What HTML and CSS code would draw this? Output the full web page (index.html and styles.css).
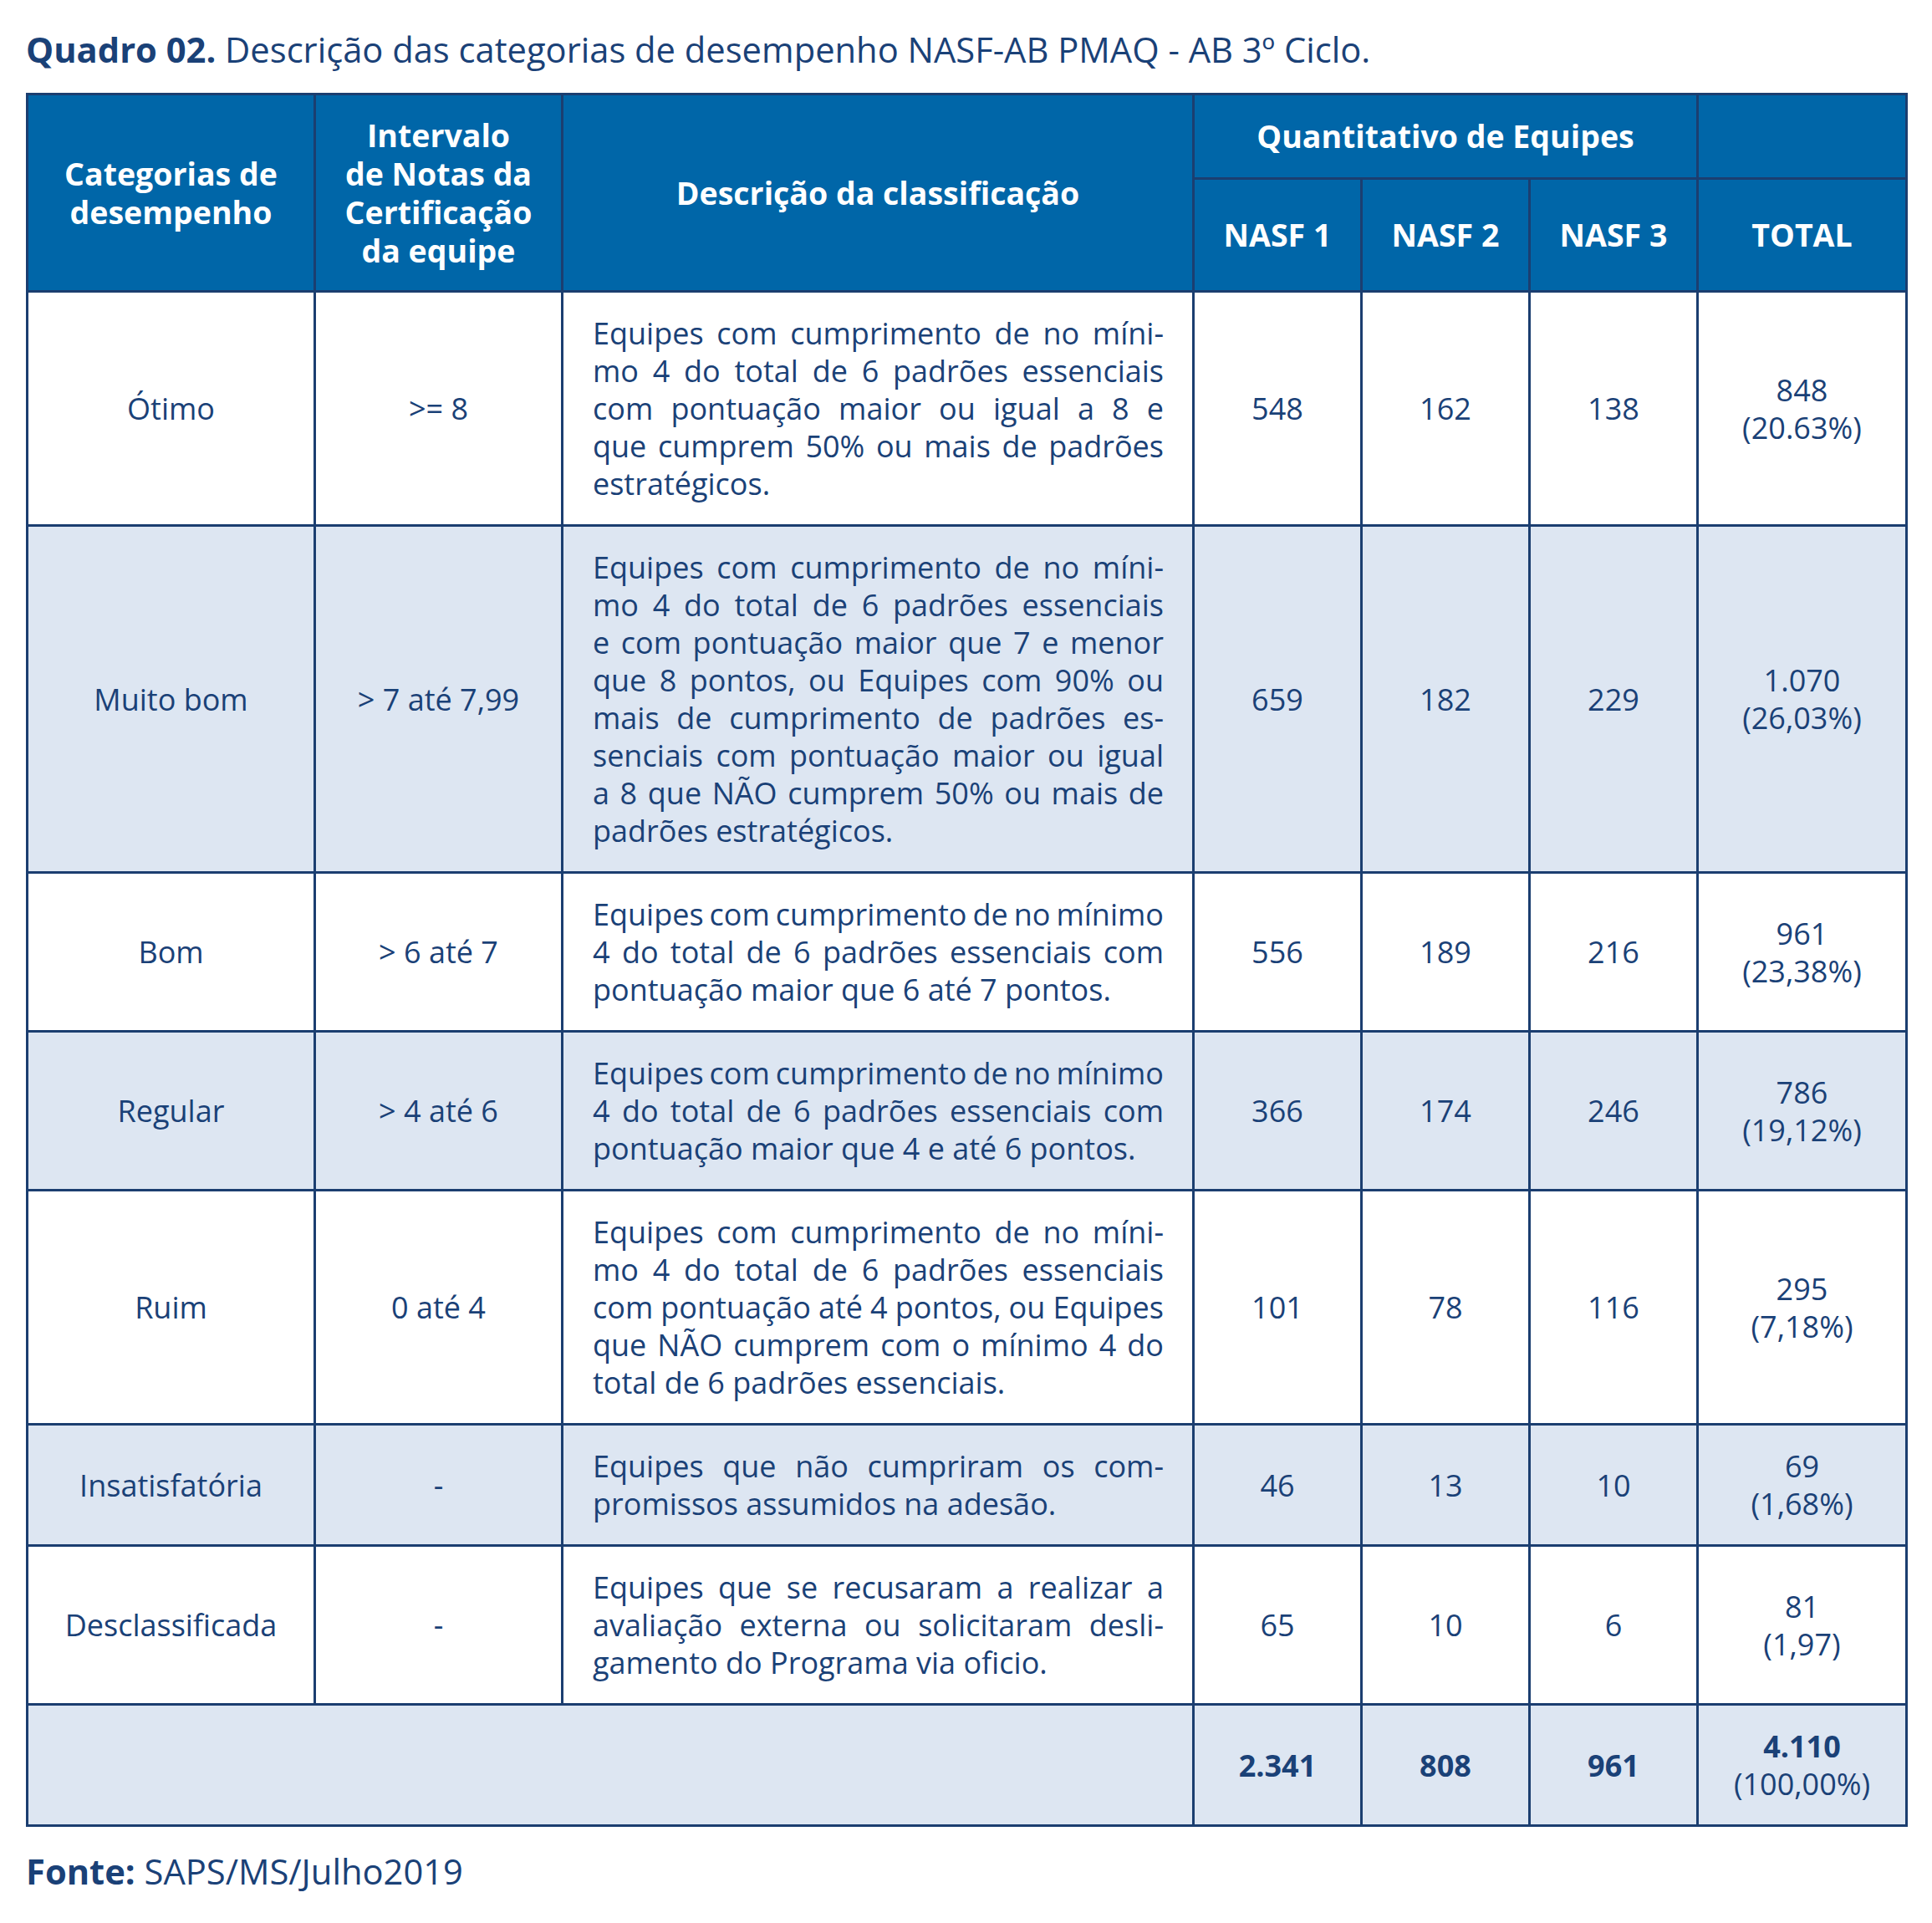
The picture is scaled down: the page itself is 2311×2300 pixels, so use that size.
FILE: index.html
```html
<!DOCTYPE html>
<html lang="pt-BR">
<head>
<meta charset="utf-8">
<title>Quadro 02</title>
<link rel="stylesheet" href="styles.css">
</head>
<body>
<div class="page">
  <h1 class="caption"><strong>Quadro 02.</strong> Descrição das categorias de desempenho NASF-AB PMAQ - AB 3º Ciclo.</h1>
  <table class="quadro">
    <colgroup>
      <col class="c-cat"><col class="c-int"><col class="c-desc"><col class="c-n"><col class="c-n"><col class="c-n"><col class="c-tot">
    </colgroup>
    <thead>
      <tr class="h1">
        <th rowspan="2"><span class="hl">Categorias de</span><span class="hl">desempenho</span></th>
        <th rowspan="2"><span class="hl">Intervalo</span><span class="hl">de Notas da</span><span class="hl">Certificação</span><span class="hl">da equipe</span></th>
        <th rowspan="2">Descrição da classificação</th>
        <th colspan="3">Quantitativo de Equipes</th>
        <th></th>
      </tr>
      <tr class="h2">
        <th>NASF 1</th><th>NASF 2</th><th>NASF 3</th><th>TOTAL</th>
      </tr>
    </thead>
    <tbody>
      <tr>
        <td>Ótimo</td><td>&gt;= 8</td>
        <td class="desc"><span class="j">Equipes com cumprimento de no míni-</span><span class="j">mo 4 do total de 6 padrões essenciais</span><span class="j">com pontuação maior ou igual a 8 e</span><span class="j">que cumprem 50% ou mais de padrões</span><span class="l">estratégicos.</span></td>
        <td>548</td><td>162</td><td>138</td><td>848<br>(20.63%)</td>
      </tr>
      <tr class="alt">
        <td>Muito bom</td><td>&gt; 7 até 7,99</td>
        <td class="desc"><span class="j">Equipes com cumprimento de no míni-</span><span class="j">mo 4 do total de 6 padrões essenciais</span><span class="j">e com pontuação maior que 7 e menor</span><span class="j">que 8 pontos, ou Equipes com 90% ou</span><span class="j">mais de cumprimento de padrões es-</span><span class="j">senciais com pontuação maior ou igual</span><span class="j">a 8 que NÃO cumprem 50% ou mais de</span><span class="l">padrões estratégicos.</span></td>
        <td>659</td><td>182</td><td>229</td><td>1.070<br>(26,03%)</td>
      </tr>
      <tr>
        <td>Bom</td><td>&gt; 6 até 7</td>
        <td class="desc"><span class="j tight">Equipes com cumprimento de no mínimo</span><span class="j">4 do total de 6 padrões essenciais com</span><span class="l">pontuação maior que 6 até 7 pontos.</span></td>
        <td>556</td><td>189</td><td>216</td><td>961<br>(23,38%)</td>
      </tr>
      <tr class="alt">
        <td>Regular</td><td>&gt; 4 até 6</td>
        <td class="desc"><span class="j tight">Equipes com cumprimento de no mínimo</span><span class="j">4 do total de 6 padrões essenciais com</span><span class="l">pontuação maior que 4 e até 6 pontos.</span></td>
        <td>366</td><td>174</td><td>246</td><td>786<br>(19,12%)</td>
      </tr>
      <tr>
        <td>Ruim</td><td>0 até 4</td>
        <td class="desc"><span class="j">Equipes com cumprimento de no míni-</span><span class="j">mo 4 do total de 6 padrões essenciais</span><span class="j">com pontuação até 4 pontos, ou Equipes</span><span class="j">que NÃO cumprem com o mínimo 4 do</span><span class="l">total de 6 padrões essenciais.</span></td>
        <td>101</td><td>78</td><td>116</td><td>295<br>(7,18%)</td>
      </tr>
      <tr class="alt">
        <td>Insatisfatória</td><td>-</td>
        <td class="desc"><span class="j">Equipes que não cumpriram os com-</span><span class="l">promissos assumidos na adesão.</span></td>
        <td>46</td><td>13</td><td>10</td><td>69<br>(1,68%)</td>
      </tr>
      <tr>
        <td>Desclassificada</td><td>-</td>
        <td class="desc"><span class="j">Equipes que se recusaram a realizar a</span><span class="j">avaliação externa ou solicitaram desli-</span><span class="l">gamento do Programa via oficio.</span></td>
        <td>65</td><td>10</td><td>6</td><td>81<br>(1,97)</td>
      </tr>
      <tr class="alt total">
        <td colspan="3"></td>
        <td><b>2.341</b></td><td><b>808</b></td><td><b>961</b></td><td><b>4.110</b><br>(100,00%)</td>
      </tr>
    </tbody>
  </table>
  <p class="source"><strong>Fonte:</strong> SAPS/MS/Julho2019</p>
</div>
</body>
</html>
```

FILE: styles.css
```css
html, body {
  margin: 0;
  padding: 0;
  background: #ffffff;
}

.page {
  display: flex;
  flex-direction: column;
  align-items: flex-start;
  gap: 28px;
  padding: 34px 0 0 31px;
  font-family: "Open Sans", "Noto Sans", "Liberation Sans", sans-serif;
  color: #1a4177;
}

.caption {
  margin: 0;
  font-size: 41.7px;
  line-height: 49px;
  font-weight: 400;
  color: #1a4177;
}

.caption strong,
.source strong {
  font-weight: 700;
}

.quadro {
  border-collapse: collapse;
  table-layout: fixed;
  width: 2250px;
  border: 3px solid #1b3e70;
  font-size: 36px;
  line-height: 45px;
}

.c-cat { width: 344px; }
.c-int { width: 296px; }
.c-desc { width: 755px; }
.c-n { width: 201px; }
.c-tot { width: 250px; }

.quadro th,
.quadro td {
  border: 3px solid #1b3e70;
  text-align: center;
  vertical-align: middle;
}

.quadro th {
  background: #0066a8;
  color: #ffffff;
  font-size: 37.5px;
  line-height: 46px;
  font-weight: 700;
  padding: 0 8px;
}

.quadro th .hl {
  display: block;
}

.quadro .h1 th { height: 98px; }
.quadro .h2 th { height: 132px; }

.quadro td {
  padding: 26px 20px;
  color: #1a4177;
  background: #ffffff;
}

.quadro tr.alt td {
  background: #dde6f2;
}

.quadro td.desc {
  padding: 26px 34px 26px 35px;
  text-align: left;
}

.desc span {
  display: block;
}

.desc .j {
  text-align: justify;
  text-align-last: justify;
  word-spacing: -0.08em;
}

.desc .j.tight {
  word-spacing: -0.14em;
}

.desc .l {
  text-align: left;
}

.total b {
  font-weight: 700;
}

.source {
  margin: 0;
  font-size: 41.7px;
  line-height: 49px;
  color: #1a4177;
}
```
